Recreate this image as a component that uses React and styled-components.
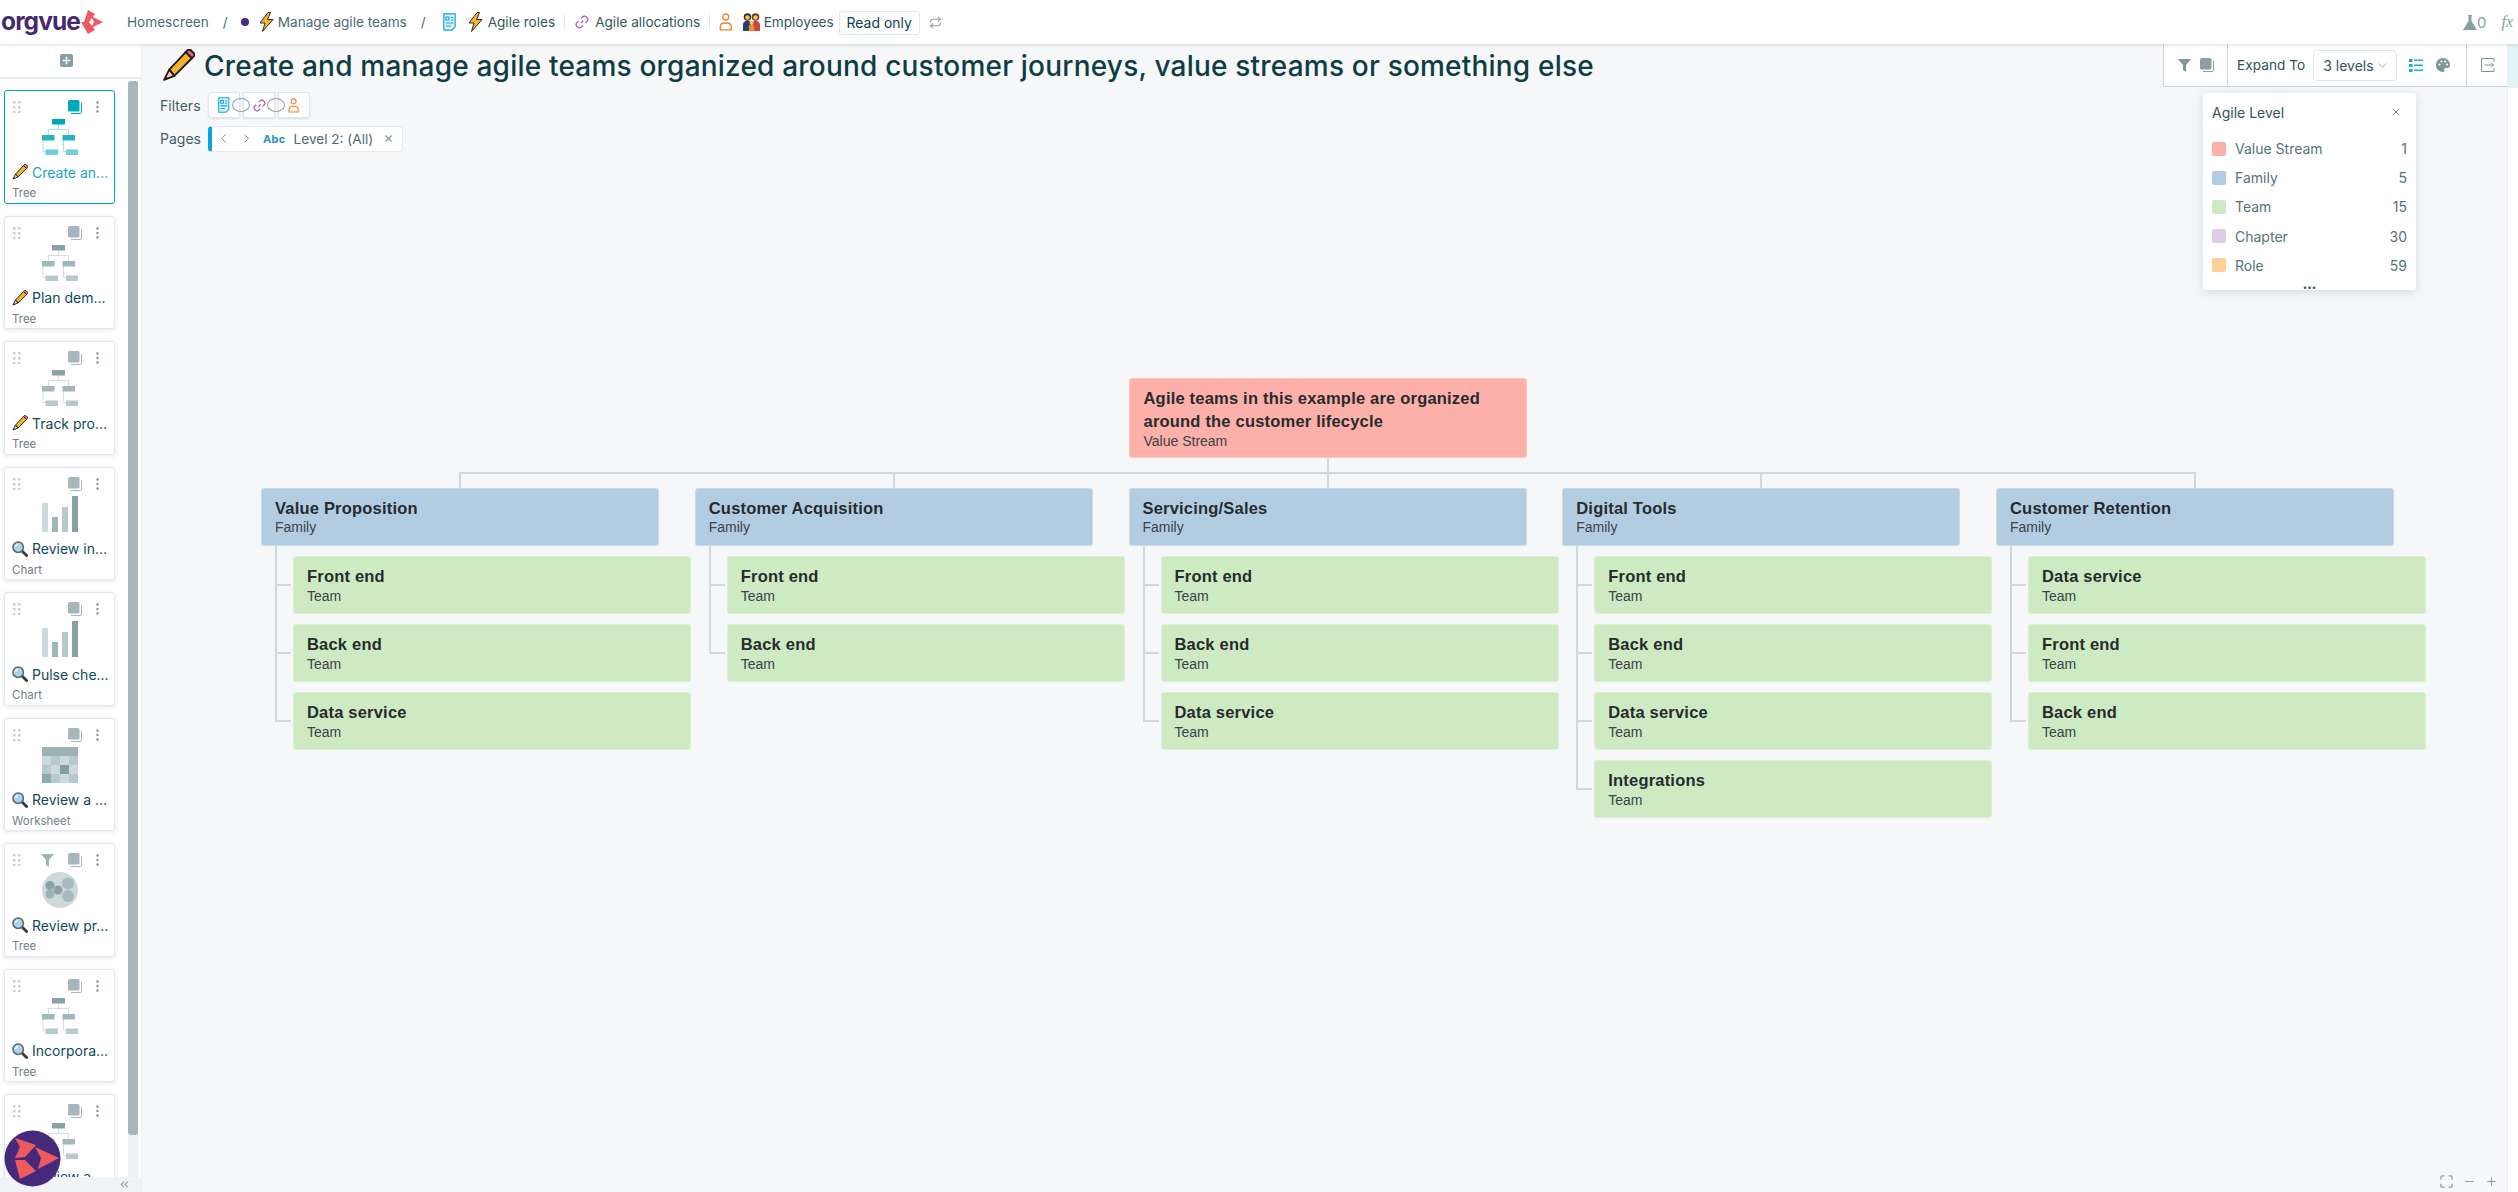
import styled, { createGlobalStyle } from "styled-components";
import { ChevronDown, ChevronLeft, ChevronRight, ChevronsLeft, Maximize, Minus, Plus, Repeat, X } from "lucide-react";

const GlobalStyle = createGlobalStyle`
  html, body { margin: 0; padding: 0; height: 100%; background: #f5f7f9; overflow: hidden; }
  body { font-family: Inter, "Noto Sans", sans-serif; }
  * { box-sizing: border-box; }
`;

const Page = styled.div`
  width: 2518px;
  height: 1192px;
  display: flex;
  flex-direction: column;
  position: relative;
  overflow: hidden;
`;

const TopBar = styled.header`
  height: 44px;
  flex: none;
  display: flex;
  align-items: center;
  background: #fff;
  box-shadow: 0 1px 3px rgba(40, 70, 80, 0.18);
  position: relative;
  z-index: 3;
  font-size: 13.6px;
  color: #4d6b70;
  white-space: nowrap;
`;

const LogoWrap = styled.div`
  width: 127px;
  flex: none;
  display: flex;
  align-items: center;
  padding-left: 1px;
  gap: 1px;
`;

const LogoText = styled.span`
  font-family: Inter, sans-serif;
  font-size: 24.5px;
  font-weight: 700;
  color: #47296f;
  letter-spacing: -0.9px;
  line-height: 44px;
  margin-top: -3px;
`;

const Crumb = styled.span`
  margin-left: ${(p) => p.$left || 0}px;
  display: inline-flex;
  align-items: center;
  color: ${(p) => p.$color || "inherit"};
`;

const Slash = styled.span`
  color: #4d6b70;
  margin: 0 ${(p) => p.$right || 14}px 0 14px;
`;

const Dot = styled.span`
  width: 8px;
  height: 8px;
  border-radius: 50%;
  background: #4a2a8a;
  margin-right: 10px;
`;

const Thin = styled.span`
  width: 1px;
  height: 16px;
  background: #e3e9ec;
  margin: 0 9px;
`;

const ReadOnly = styled.span`
  width: 81px;
  height: 24px;
  margin-left: 5px;
  margin-top: 1px;
  display: flex;
  align-items: center;
  justify-content: center;
  border: 1px solid #e1e8ea;
  border-radius: 3px;
  background: #fbfdfd;
  color: #153f46;
  font-size: 14px;
`;

const TopRight = styled.div`
  margin-left: auto;
  display: flex;
  align-items: center;
  padding-right: 5px;
  color: #86a0a2;
  font-size: 15px;
`;

const Fx = styled.i`
  font-family: "Liberation Serif", serif;
  font-size: 16px;
  margin-left: 15px;
`;

const Body = styled.div`
  flex: 1;
  display: flex;
  min-height: 0;
`;

const Sidebar = styled.aside`
  width: 141px;
  flex: none;
  background: #fff;
  display: flex;
  flex-direction: column;
  position: relative;
  box-shadow: 1px 0 0 #eef1f3;
`;

const AddRow = styled.div`
  height: 35px;
  flex: none;
  display: flex;
  align-items: center;
  justify-content: center;
  padding-right: 9px;
  border-bottom: 2px solid #e3e9ec;
`;

const AddButton = styled.span`
  width: 13px;
  height: 13px;
  border-radius: 2px;
  background: #88a0a3;
  color: #fff;
  display: flex;
  align-items: center;
  justify-content: center;
`;

const ScrollArea = styled.div`
  flex: 1;
  min-height: 0;
  display: flex;
  overflow: hidden;
`;

const CardList = styled.div`
  width: 126px;
  flex: none;
  padding: 11px 0 0 4px;
  display: flex;
  flex-direction: column;
  gap: 12px;
`;

const Track = styled.div`
  width: 10px;
  margin: 2px 0 0 2px;
  background: #eef1f3;
  flex: none;
`;

const Thumb = styled.div`
  height: 1054px;
  background: #a6b6bc;
  border-radius: 3px;
`;

const Card = styled.div`
  width: 111px;
  height: 113.5px;
  flex: none;
  background: #fff;
  border: 1px solid ${(p) => (p.$active ? "#00a8bd" : "#e2e8ec")};
  border-radius: 3px;
  box-shadow: 0 1px 4px rgba(40, 70, 90, 0.14);
  padding: 8px 15px 0 7px;
  display: flex;
  flex-direction: column;
`;

const CardTools = styled.div`
  height: 16px;
  display: flex;
  align-items: center;
  justify-content: flex-end;
  gap: 14px;
`;

const Grip = styled.svg`
  margin-right: auto;
  margin-left: 1px;
`;

const Thumbnail = styled.div`
  height: 36px;
  margin: 4px -8px 0 0;
  display: flex;
  justify-content: center;
`;

const CardTitle = styled.div`
  display: flex;
  align-items: center;
  gap: 4px;
  margin: 7px -14px 0 0;
  height: 20px;
  font-size: 14px;
  color: ${(p) => (p.$active ? "#1ca3c4" : "#0f4a5c")};
  white-space: nowrap;
`;

const CardType = styled.div`
  margin-top: 4px;
  font-size: 11.5px;
  line-height: 14px;
  color: #6f7f84;
`;

const CollapseBar = styled.div`
  position: absolute;
  left: 0;
  right: 0;
  bottom: 0;
  height: 15px;
  background: #f1f4f6;
  display: flex;
  justify-content: flex-end;
  align-items: center;
  padding-right: 10px;
  color: #8fa3a7;
`;

const RoundLogo = styled.svg`
  position: absolute;
  left: 4px;
  top: 1130px;
  z-index: 5;
`;

const Main = styled.main`
  flex: 1;
  min-width: 0;
  position: relative;
  padding-left: 19px;
`;

const TitleRow = styled.div`
  height: 43px;
  display: flex;
  align-items: center;
  gap: 9px;
  padding-left: 2px;
`;

const Title = styled.h1`
  margin: 0;
  font-size: 28px;
  font-weight: 500;
  letter-spacing: 0.2px;
  color: #0f3d44;
  white-space: nowrap;
`;

const FilterRow = styled.div`
  display: flex;
  align-items: center;
  height: ${(p) => p.$height}px;
  font-size: 14px;
  color: #3f6166;
`;

const RowLabel = styled.span`
  width: 48px;
`;

const FilterGroup = styled.div`
  display: flex;
  gap: 3px;
  height: 26px;
`;

const FilterChip = styled.span`
  width: 32px;
  height: 26px;
  background: #fff;
  border: 1px solid #dfe6ea;
  border-radius: 4px 0 0 4px;
  box-shadow: 0 1px 2px rgba(40, 70, 90, 0.12);
  display: flex;
  align-items: center;
  justify-content: center;
  position: relative;
  &:nth-child(2) { border-radius: 0; }
  &:last-child { border-radius: 0 4px 4px 0; }
`;

const ChipRing = styled.span`
  position: absolute;
  right: -11px;
  top: 5px;
  width: 18px;
  height: 14px;
  border: 1.5px solid #8aa3a6;
  border-radius: 50%;
  z-index: 1;
`;

const PagesChip = styled.div`
  width: 195px;
  height: 26px;
  background: #fff;
  border: 1px solid #e3e9ec;
  border-left: 4px solid #05a3df;
  border-radius: 4px;
  display: flex;
  align-items: center;
  padding-left: 4px;
  color: #4d6b70;
  font-size: 13.6px;
  white-space: nowrap;
`;

const PageArrow = styled.span`
  display: flex;
  margin-left: ${(p) => p.$left || 0}px;
  color: #6f8a8e;
`;

const Abc = styled.span`
  font-size: 11px;
  font-weight: 700;
  color: #2a8fc0;
  margin: 0 8px 0 9px;
  letter-spacing: 0.3px;
`;

const PageClose = styled.span`
  display: flex;
  margin-left: 10px;
  color: #7f9699;
`;

const Toolbar = styled.div`
  position: absolute;
  top: 0;
  right: 11px;
  width: 344px;
  height: 43px;
  display: flex;
  background: #fff;
  border-left: 1px solid #c9d5da;
  border-bottom: 1px solid #c9d5da;
`;

const ToolSection = styled.div`
  width: ${(p) => p.$width}px;
  flex: none;
  display: flex;
  align-items: center;
  gap: ${(p) => p.$gap || 0}px;
  padding-left: ${(p) => p.$pad || 0}px;
  border-right: ${(p) => (p.$noBorder ? "none" : "1px solid #c9d5da")};
  font-size: 13.7px;
  color: #2f5359;
`;

const ToolSpacer = styled.span`
  width: 13px;
`;

const SelectBox = styled.div`
  width: 84px;
  height: 31px;
  margin: 0 12px 0 8px;
  border: 1px solid #dfe6ea;
  border-radius: 4px;
  display: flex;
  align-items: center;
  justify-content: space-between;
  padding: 0 6px 0 9px;
  color: #2f5359;
  font-size: 14px;
`;

const RightStrip = styled.div`
  position: absolute;
  top: 0;
  right: 0;
  bottom: 0;
  width: 11px;
  background: #fff;
  border-left: 1px solid #ecf0f2;
  &::before {
    content: "";
    display: block;
    height: 44px;
    background: #e3f3f6;
  }
`;

const Legend = styled.div`
  position: absolute;
  top: 49px;
  left: 2062px;
  width: 213px;
  height: 197px;
  background: #fff;
  border-radius: 3px;
  box-shadow: 0 2px 10px rgba(40, 70, 90, 0.16);
  padding: 0 9px;
  z-index: 2;
`;

const LegendHead = styled.div`
  height: 38px;
  display: flex;
  align-items: center;
  justify-content: space-between;
  font-size: 14px;
  color: #2f5359;
  padding-right: 5px;
  margin-bottom: 3px;
`;

const LegendRow = styled.div`
  height: 29.2px;
  display: flex;
  align-items: center;
  font-size: 14px;
  color: #557378;
`;

const Swatch = styled.span`
  width: 14px;
  height: 14px;
  border-radius: 2px;
  background: ${(p) => p.$color};
  margin-right: 9px;
`;

const LegendCount = styled.span`
  margin-left: auto;
`;

const LegendMore = styled.div`
  text-align: center;
  font-size: 8px;
  line-height: 8px;
  margin-top: 3px;
  color: #37585d;
`;

const Tree = styled.div`
  position: absolute;
  top: 334px;
  left: 120px;
  width: 2150px;
  display: flex;
  flex-direction: column;
`;

const Node = styled.div`
  width: 398px;
  background: ${(p) => p.$color};
  border: 1px solid rgba(255, 255, 255, 0.28);
  border-radius: 3px;
  color: #282b2e;
  font-family: "Liberation Sans", Arial, sans-serif;
`;

const RootNode = styled(Node)`
  height: 80px;
  padding: 8px 14px;
  margin-left: 867.5px;
  position: relative;
  &::after {
    content: "";
    position: absolute;
    left: 197px;
    top: 79px;
    width: 2px;
    height: 30px;
    background: #cfd7df;
  }
`;

const FamilyRow = styled.div`
  display: flex;
  gap: 35.75px;
  margin-top: 30px;
`;

const FamilyColumn = styled.div`
  width: 398px;
  position: relative;
  &::before {
    content: "";
    position: absolute;
    top: -16px;
    left: ${(p) => (p.$first ? "198px" : "-36px")};
    width: ${(p) => (p.$first || p.$last ? "236px" : "434px")};
    height: 2px;
    background: #cfd7df;
  }
  &::after {
    content: "";
    position: absolute;
    top: -16px;
    left: 198px;
    width: 2px;
    height: 16px;
    background: #cfd7df;
  }
`;

const FamilyNode = styled(Node)`
  height: 58px;
  padding: 8px 13px 0;
`;

const TeamList = styled.div`
  margin-left: 32px;
  padding-top: 10px;
  display: flex;
  flex-direction: column;
  gap: 10px;
`;

const TeamItem = styled.div`
  position: relative;
  &::before {
    content: "";
    position: absolute;
    left: -18px;
    top: 28px;
    width: 16px;
    height: 2px;
    background: #cfd7df;
  }
  &::after {
    content: "";
    position: absolute;
    left: -18px;
    top: ${(p) => (p.$first ? "-10px" : "-40px")};
    width: 2px;
    height: ${(p) => (p.$first ? "38px" : "70px")};
    background: #cfd7df;
  }
`;

const TeamNode = styled(Node)`
  height: 58px;
  padding: 8px 13px 0;
`;

const NodeTitle = styled.div`
  font-size: 16.5px;
  font-weight: 700;
  line-height: ${(p) => p.$line || 22}px;
  letter-spacing: 0.2px;
`;

const NodeType = styled.div`
  font-size: 14px;
  line-height: 18px;
  margin-top: ${(p) => p.$top || 0}px;
  color: #3b4248;
`;

const ZoomTools = styled.div`
  position: absolute;
  right: 20px;
  bottom: 3px;
  display: flex;
  align-items: center;
  gap: 9px;
  color: #86a0a2;
`;

const Bolt = () => (
  <svg width="15" height="20" viewBox="0 0 15 20">
    <path d="M9 .5 1 11h5l-2.500 8.500L14 7.500H8.500L11.500.5z" fill="#f7b62b" stroke="#2a2a2a" strokeWidth="1" strokeLinejoin="round" />
  </svg>
);

const DocIcon = ({ size = 18 }) => (
  <svg width={size * 0.72} height={size} viewBox="0 0 13 18" fill="#d8f1fb" stroke="#12a5dc" strokeWidth="1.2">
    <path d="M.8.8h11.4v13l-3.2 3.4H.8z" />
    <path d="M3 4h3v3H3zM8 4.500h2.500M8 7h2.500M3 10h7.500M3 13h5" />
  </svg>
);

const LinkIcon = ({ size = 14 }) => (
  <svg width={size} height={size} viewBox="0 0 16 16" fill="none" stroke="#b04fa8" strokeWidth="1.4">
    <path d="M6.800 9.200 9.500 6.500M7 3.900l1.700-1.700a3 3 0 0 1 4.200 0l.9.9a3 3 0 0 1 0 4.200L12.100 9M9 12.100l-1.700 1.700a3 3 0 0 1-4.200 0l-.9-.9a3 3 0 0 1 0-4.200L3.900 7" />
  </svg>
);

const PersonIcon = ({ size = 18 }) => (
  <svg width={size * 0.75} height={size} viewBox="0 0 13 18" fill="none" stroke="#ef8231" strokeWidth="1.3">
    <circle cx="6.500" cy="4" r="3" />
    <path d="M1 16.800v-3.300a4 4 0 0 1 4-3.500h3a4 4 0 0 1 4 3.500v3.300z" />
  </svg>
);

const FamilyEmoji = () => (
  <svg width="17" height="18" viewBox="0 0 19 20">
    <circle cx="5" cy="4.500" r="4.200" fill="#3b2a1e" />
    <circle cx="14" cy="4.500" r="4.200" fill="#5a3a22" />
    <circle cx="5" cy="5" r="2.600" fill="#f6c35c" />
    <circle cx="14" cy="5" r="2.600" fill="#f6c35c" />
    <path d="M0 20v-7c0-3 2-4.500 5-4.500S9 10 9 13v7z" fill="#2c3e70" />
    <path d="M10 20v-7c0-3 1.500-4.500 4-4.500s5 1.500 5 4.500v7z" fill="#c9473f" />
    <circle cx="9.500" cy="11" r="2.200" fill="#f6c35c" />
    <path d="M6.500 20v-5c0-1.500 1.300-2 3-2s3 .5 3 2v5z" fill="#ef8f2f" />
  </svg>
);

const Pencil = ({ size = 16 }) => (
  <svg width={size} height={size} viewBox="0 0 32 32">
    <path d="M7 20 23 3l6 6L12 26z" fill="#f5b02e" stroke="#1d1d1d" strokeWidth="1.800" strokeLinejoin="round" />
    <path d="M23 3l1.800-1.800c1-1 2.200-1 3.200 0l2.800 2.800c1 1 1 2.200 0 3.200L29 9z" fill="#ef5f6b" stroke="#1d1d1d" strokeWidth="1.800" />
    <path d="M7 20 2 30l10-4z" fill="#f3d3a6" stroke="#1d1d1d" strokeWidth="1.800" strokeLinejoin="round" />
    <path d="M3.800 26.500 2 30l3.600-1.500z" fill="#1d1d1d" />
  </svg>
);

const Magnifier = () => (
  <svg width="16" height="16" viewBox="0 0 16 16">
    <path d="M10 10 14.600 14.600" stroke="#3a3a3a" strokeWidth="2.800" strokeLinecap="round" />
    <circle cx="6.200" cy="6.200" r="5.200" fill="#a8d4ef" stroke="#5b6469" strokeWidth="1.500" />
    <path d="M3.500 6a3 3 0 0 1 2.500-2.700" stroke="#fff" strokeWidth="1.200" fill="none" />
  </svg>
);

const Funnel = ({ color = "#8da3a6", size = 13 }) => (
  <svg width={size} height={size} viewBox="0 0 13 13">
    <path d="M0 0h13L8 6v7L5 11V6z" fill={color} />
  </svg>
);

const CopyIcon = ({ color = "#a6b6bc", size = 14 }) => (
  <svg width={size} height={size} viewBox="0 0 14 14">
    <rect x="0" y="0" width="11.500" height="11.500" rx="1.500" fill={color} />
    <path d="M13.500 3v9.200a1.300 1.300 0 0 1-1.300 1.300H3" stroke={color} strokeWidth="1" fill="none" />
  </svg>
);

const GripIcon = () => (
  <Grip width="8" height="12" viewBox="0 0 8 12" fill="#c6d1d5">
    {[0, 5, 10].map((y) => [1, 6].map((x) => <rect key={`${x}${y}`} x={x - 1} y={y} width="2.500" height="2.500" />))}
  </Grip>
);

const MoreIcon = () => (
  <svg width="3" height="12" viewBox="0 0 3 12" fill="#7f9699">
    <circle cx="1.500" cy="1.500" r="1.200" />
    <circle cx="1.500" cy="6" r="1.200" />
    <circle cx="1.500" cy="10.500" r="1.200" />
  </svg>
);

const TreeThumb = ({ active }) => {
  const dark = active ? "#00a8bd" : "#8aa2a5";
  const mid = active ? "#27b5c6" : "#a3b6b9";
  const light = active ? "#6bd0dc" : "#b8c9cb";
  const line = active ? "#a5e3ea" : "#d3dee0";
  return (
    <svg width="36" height="36" viewBox="0 0 36 36">
      <path d="M16.500 5v5.500M6.500 16V10.500h20V16M1 20v12.500h3M21.500 20v12.500h3" stroke={line} fill="none" strokeWidth="1" />
      <rect x="10" y="0" width="13" height="5.500" fill={dark} />
      <rect x="0" y="16" width="12.500" height="5.500" fill={mid} />
      <rect x="20.500" y="16" width="12.500" height="5.500" fill={mid} />
      <rect x="3.500" y="30.500" width="12.500" height="5.500" fill={light} />
      <rect x="24" y="30.500" width="12" height="5.500" fill={light} />
    </svg>
  );
};

const ChartThumb = () => (
  <svg width="36" height="36" viewBox="0 0 36 36">
    <rect x="0" y="7" width="6" height="29" fill="#cdd9db" />
    <rect x="10" y="21" width="6" height="15" fill="#a0b5b8" />
    <rect x="20" y="11" width="6" height="25" fill="#b8c9cb" />
    <rect x="30" y="0" width="6" height="36" fill="#86a0a2" />
  </svg>
);

const GridThumb = () => {
  const rows = [
    ["#cdd9db", "#b8c9cb", "#cdd9db", "#b8c9cb"],
    ["#b8c9cb", "#cdd9db", "#86a0a2", "#cdd9db"],
    ["#8fa8ab", "#b8c9cb", "#cdd9db", "#b8c9cb"],
  ];
  return (
    <svg width="36" height="36" viewBox="0 0 36 36">
      <rect width="36" height="9" fill="#9cb1b4" />
      {rows.map((r, y) => r.map((c, x) => <rect key={`${x}-${y}`} x={x * 9} y={9 + y * 9} width="9" height="9" fill={c} />))}
    </svg>
  );
};

const BubbleThumb = () => (
  <svg width="36" height="36" viewBox="0 0 36 36">
    <circle cx="18" cy="18" r="18" fill="#cdd9db" />
    <circle cx="8" cy="13.500" r="4.500" fill="#8aa2a5" />
    <circle cx="8" cy="22" r="4.500" fill="#9db2b5" />
    <circle cx="16" cy="18" r="4.500" fill="#8aa2a5" />
    <circle cx="26" cy="11.500" r="6" fill="#a8babd" />
    <circle cx="26" cy="24" r="6" fill="#a8babd" />
  </svg>
);

const cards = [
  { icon: "pencil", title: "Create an...", type: "Tree", thumb: "tree", active: true },
  { icon: "pencil", title: "Plan dem...", type: "Tree", thumb: "tree" },
  { icon: "pencil", title: "Track pro...", type: "Tree", thumb: "tree" },
  { icon: "lens", title: "Review in...", type: "Chart", thumb: "chart" },
  { icon: "lens", title: "Pulse che...", type: "Chart", thumb: "chart" },
  { icon: "lens", title: "Review a ...", type: "Worksheet", thumb: "grid" },
  { icon: "lens", title: "Review pr...", type: "Tree", thumb: "bubble", filter: true },
  { icon: "lens", title: "Incorpora...", type: "Tree", thumb: "tree" },
  { icon: "lens", title: "Review a ...", thumb: "tree" },
];

const families = [
  { name: "Value Proposition", teams: ["Front end", "Back end", "Data service"] },
  { name: "Customer Acquisition", teams: ["Front end", "Back end"] },
  { name: "Servicing/Sales", teams: ["Front end", "Back end", "Data service"] },
  { name: "Digital Tools", teams: ["Front end", "Back end", "Data service", "Integrations"] },
  { name: "Customer Retention", teams: ["Data service", "Front end", "Back end"] },
];

const legend = [
  { label: "Value Stream", count: 1, color: "#fdb0aa" },
  { label: "Family", count: 5, color: "#b2cde2" },
  { label: "Team", count: 15, color: "#cdeac3" },
  { label: "Chapter", count: 30, color: "#dfcbe5" },
  { label: "Role", count: 59, color: "#fdd09b" },
];

const thumbFor = (card) => {
  if (card.thumb === "chart") return <ChartThumb />;
  if (card.thumb === "grid") return <GridThumb />;
  if (card.thumb === "bubble") return <BubbleThumb />;
  return <TreeThumb active={card.active} />;
};

const App = () => {
  return (
    <Page>
      <GlobalStyle />
      <TopBar>
        <LogoWrap>
          <LogoText>orgvue</LogoText>
          <svg width="22" height="24" viewBox="0 0 22 24">
            <path d="M7 0 14 4 8 12l6 8-7 4L0 12l3 0z" fill="#ef5a5f" />
            <path d="M10 6 22 12 10 18 13 12z" fill="#ef5a5f" />
          </svg>
        </LogoWrap>
        <Crumb>Homescreen</Crumb>
        <Slash $right={13}>/</Slash>
        <Dot />
        <Bolt />
        <Crumb $left={4}>Manage agile teams</Crumb>
        <Slash $right={17}>/</Slash>
        <DocIcon />
        <Crumb $left={12}><Bolt /></Crumb>
        <Crumb $left={5} $color="#34565b">Agile roles</Crumb>
        <Thin />
        <Crumb $left={1}><LinkIcon /></Crumb>
        <Crumb $left={6} $color="#34565b">Agile allocations</Crumb>
        <Thin />
        <PersonIcon />
        <Crumb $left={10}><FamilyEmoji /></Crumb>
        <Crumb $left={4} $color="#34565b">Employees</Crumb>
        <ReadOnly>Read only</ReadOnly>
        <Crumb $left={9}><Repeat size={13} color="#8ea3a6" /></Crumb>
        <TopRight>
          <svg width="14" height="15" viewBox="0 0 14 15">
            <path d="M5 0h4v1H8.500v5L14 15H0l5.500-9V1H5z" fill="#86a0a2" />
          </svg>
          <span>0</span>
          <Fx>fx</Fx>
        </TopRight>
      </TopBar>
      <Body>
        <Sidebar>
          <AddRow>
            <AddButton><Plus size={11} strokeWidth={3} /></AddButton>
          </AddRow>
          <ScrollArea>
            <CardList>
              {cards.map((card, i) => (
                <Card key={i} $active={card.active}>
                  <CardTools>
                    <GripIcon />
                    {card.filter && <Funnel size={13} color="#a0b3b6" />}
                    <CopyIcon color={card.active ? "#00a8bd" : "#a6b6bc"} />
                    <MoreIcon />
                  </CardTools>
                  <Thumbnail>{thumbFor(card)}</Thumbnail>
                  <CardTitle $active={card.active}>
                    {card.icon === "pencil" ? <Pencil /> : <Magnifier />}
                    {card.title}
                  </CardTitle>
                  {card.type && <CardType>{card.type}</CardType>}
                </Card>
              ))}
            </CardList>
            <Track><Thumb /></Track>
          </ScrollArea>
          <CollapseBar><ChevronsLeft size={13} /></CollapseBar>
        </Sidebar>
        <Main>
          <TitleRow>
            <Pencil size={33} />
            <Title>Create and manage agile teams organized around customer journeys, value streams or something else</Title>
          </TitleRow>
          <FilterRow $height={36}>
            <RowLabel>Filters</RowLabel>
            <FilterGroup>
              <FilterChip><DocIcon size={16} /><ChipRing /></FilterChip>
              <FilterChip><LinkIcon size={13} /><ChipRing /></FilterChip>
              <FilterChip><PersonIcon size={15} /></FilterChip>
            </FilterGroup>
          </FilterRow>
          <FilterRow $height={31}>
            <RowLabel>Pages</RowLabel>
            <PagesChip>
              <PageArrow><ChevronLeft size={15} strokeWidth={1.5} /></PageArrow>
              <PageArrow $left={8}><ChevronRight size={15} strokeWidth={1.5} /></PageArrow>
              <Abc>Abc</Abc>
              Level 2: (All)
              <PageClose><X size={11} strokeWidth={2.5} /></PageClose>
            </PagesChip>
          </FilterRow>

          <Toolbar>
            <ToolSection $width={64} $pad={14} $gap={9}>
              <Funnel color="#7f9699" />
              <CopyIcon color="#8aa0a3" />
            </ToolSection>
            <ToolSection $width={239} $pad={9}>
              Expand To
              <SelectBox>3 levels <ChevronDown size={15} strokeWidth={1.3} color="#86a0a2" /></SelectBox>
              <svg width="14" height="13" viewBox="0 0 14 13" fill="#12b4ca">
                <rect x="0" y="0" width="3.500" height="3" /><rect x="5" y="0.500" width="9" height="1.500" />
                <rect x="0" y="5" width="3.500" height="3" /><rect x="5" y="5.500" width="9" height="1.500" />
                <rect x="0" y="10" width="3.500" height="3" /><rect x="5" y="10.500" width="9" height="1.500" />
              </svg>
              <ToolSpacer />
              <svg width="14" height="14" viewBox="0 0 14 14">
                <path d="M7 0C3 0 0 3 0 7s3 7 7 7c1.500 0 1.800-1 1.300-2-.5-1 0-2 1.200-2H12c1.200 0 2-1 2-3 0-4-3-7-7-7z" fill="#7f9699" />
                <circle cx="3.500" cy="6.500" r="1.100" fill="#fff" /><circle cx="5.500" cy="3.500" r="1.100" fill="#fff" />
                <circle cx="9" cy="3.500" r="1.100" fill="#fff" /><circle cx="11" cy="6.500" r="1.100" fill="#fff" />
              </svg>
            </ToolSection>
            <ToolSection $width={40} $pad={14} $noBorder>
              <svg width="14" height="14" viewBox="0 0 14 14" fill="none" stroke="#7f9699" strokeWidth="1">
                <path d="M13 4V.5H.5v13H13V10M3.500 7h9M10 4.500 12.500 7 10 9.500" />
              </svg>
            </ToolSection>
          </Toolbar>
          <RightStrip />

          <Legend>
            <LegendHead>Agile Level <X size={12} color="#6f8a8e" /></LegendHead>
            {legend.map((item) => (
              <LegendRow key={item.label}>
                <Swatch $color={item.color} />
                {item.label}
                <LegendCount>{item.count}</LegendCount>
              </LegendRow>
            ))}
            <LegendMore>•••</LegendMore>
          </Legend>

          <Tree>
            <RootNode $color="#fdb0aa">
              <NodeTitle $line={22.5}>Agile teams in this example are organized around the customer lifecycle</NodeTitle>
              <NodeType>Value Stream</NodeType>
            </RootNode>
            <FamilyRow>
              {families.map((family, i) => (
                <FamilyColumn key={family.name} $first={i === 0} $last={i === families.length - 1}>
                  <FamilyNode $color="#b2cde2">
                    <NodeTitle>{family.name}</NodeTitle>
                    <NodeType $top={-1}>Family</NodeType>
                  </FamilyNode>
                  <TeamList>
                    {family.teams.map((team, t) => (
                      <TeamItem key={team} $first={t === 0}>
                        <TeamNode $color="#cdeac3">
                          <NodeTitle>{team}</NodeTitle>
                          <NodeType>Team</NodeType>
                        </TeamNode>
                      </TeamItem>
                    ))}
                  </TeamList>
                </FamilyColumn>
              ))}
            </FamilyRow>
          </Tree>

          <ZoomTools>
            <Maximize size={15} />
            <Minus size={13} />
            <Plus size={13} />
          </ZoomTools>
        </Main>
      </Body>
      <RoundLogo width="57" height="57" viewBox="0 0 57 57">
        <circle cx="28.500" cy="28.500" r="28" fill="#47297b" />
        <path d="M11 8 32 15 21 27 11 28 16 17zM11 30 21 30 32 41 16 49 11 30z" fill="#ef5a5f" />
        <path d="M31 17 55 28 34 39 37 28z" fill="#ef5a5f" />
      </RoundLogo>
    </Page>
  );
};

export default App;
